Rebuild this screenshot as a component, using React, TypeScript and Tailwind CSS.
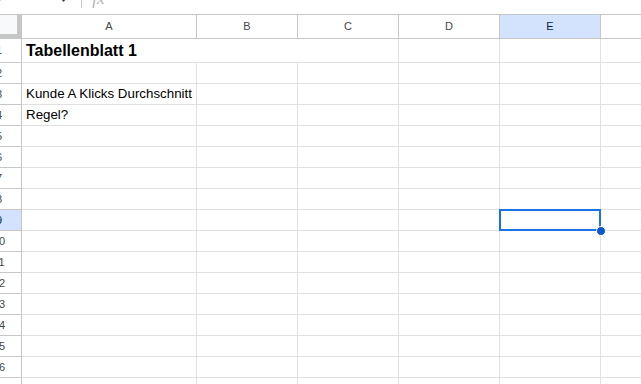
import React from "react";

const cols = [
  { key: "A", w: "w-[175px]" },
  { key: "B", w: "w-[101px]" },
  { key: "C", w: "w-[101px]" },
  { key: "D", w: "w-[101px]" },
  { key: "E", w: "w-[101px]" },
];

const rows = Array.from({ length: 17 }, (_, i) => i + 1);

const cellText: Record<string, string> = {
  A3: "Kunde A Klicks Durchschnitt",
  A4: "Regel?",
};

function RowHeader({ n }: { n: number }) {
  const selected = n === 9;
  return (
    <div
      className={`w-[22px] shrink-0 overflow-hidden border-r border-b border-[#c4c7c5] flex items-center ${
        selected ? "bg-[#d3e3fd] text-[#041e49]" : "bg-white text-[#444746]"
      }`}
    >
      <div className="w-[46px] shrink-0 -ml-[24px] text-center text-[11px] leading-none">{n}</div>
    </div>
  );
}

function Cell({ w, text }: { w: string; text?: string }) {
  return (
    <div className={`${w} shrink-0 border-r border-b border-[#e1e1e1] flex items-end pl-[4px] pb-[3px] overflow-visible`}>
      {text && <span className="text-[13.33px] leading-[15px] text-black whitespace-nowrap">{text}</span>}
    </div>
  );
}

export default function App() {
  return (
    <div className="relative w-[641px] h-[384px] overflow-hidden bg-white font-['Liberation_Sans',Arial,sans-serif]">
      {/* formula bar, cut off at the top */}
      <div className="h-[15px] border-b border-[#c4c7c5] flex items-start overflow-hidden">
        <span className="-ml-[5px] -mt-[10px] text-[13px] leading-[14px] text-[#5f6368]">9</span>
        <svg className="ml-[58px] -mt-[2px]" width="7" height="4" viewBox="0 0 7 4">
          <path d="M0 0 L7 0 L3.5 4 Z" fill="#444746" />
        </svg>
        <div className="ml-[14px] w-px h-[8px] bg-[#c4c7c5]" />
        <span className="ml-[10px] -mt-[10px] text-[17px] leading-[17px] italic text-[#b4b4b4] font-['Liberation_Serif',serif]">
          fx
        </span>
      </div>

      {/* column headers */}
      <div className="flex h-[24px]">
        <div className="w-[22px] shrink-0 bg-[#f8f9fa] border-r-[5px] border-b-[5px] border-[#c4c7c5]" />
        {cols.map((c) => (
          <div
            key={c.key}
            className={`${c.w} shrink-0 border-r border-b border-[#c4c7c5] flex items-center justify-center text-[11px] ${
              c.key === "E" ? "bg-[#d3e3fd] text-[#041e49]" : "text-[#444746]"
            }`}
          >
            {c.key}
          </div>
        ))}
        <div className="flex-1 border-b border-[#c4c7c5]" />
      </div>

      {/* rows */}
      {rows.map((n) => (
        <div key={n} className={`flex ${n === 1 ? "h-[24px]" : "h-[21px]"}`}>
          <RowHeader n={n} />
          {n === 1 ? (
            <>
              <div className="w-[377px] shrink-0 border-r border-b border-[#e1e1e1] flex items-end pl-[4px] pb-[2px]">
                <span className="text-[16px] leading-[18px] font-bold text-black whitespace-nowrap">Tabellenblatt 1</span>
              </div>
              <Cell w="w-[101px]" />
              <Cell w="w-[101px]" />
            </>
          ) : (
            cols.map((c) => <Cell key={c.key} w={c.w} text={cellText[`${c.key}${n}`]} />)
          )}
          <div className="flex-1 border-b border-[#e1e1e1]" />
        </div>
      ))}

      {/* selection on E9 */}
      <div className="absolute left-[499px] top-[209px] w-[102px] h-[22px] border-2 border-[#1a73e8]" />
      <div className="absolute left-[596px] top-[226px] w-[10px] h-[10px] rounded-full bg-[#0b57d0] border border-white" />
    </div>
  );
}
